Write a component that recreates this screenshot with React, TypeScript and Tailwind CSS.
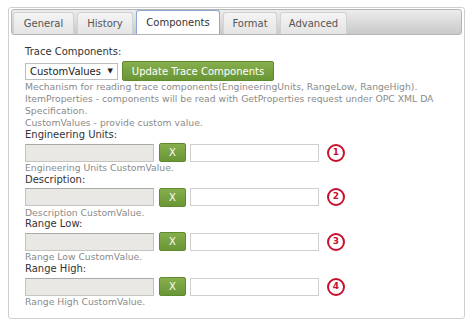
const tabs = [
    { name: 'General', w: 'w-[61px]' },
    { name: 'History', w: 'w-[56px]' },
    { name: 'Components', w: 'w-[84px]' },
    { name: 'Format', w: 'w-[54px]' },
    { name: 'Advanced', w: 'w-[67px]' },
];

const fields = [
    { label: 'Engineering Units:', note: 'Engineering Units CustomValue.', n: 1 },
    { label: 'Description:', note: 'Description CustomValue.', n: 2 },
    { label: 'Range Low:', note: 'Range Low CustomValue.', n: 3 },
    { label: 'Range High:', note: 'Range High CustomValue.', n: 4 },
];

const FieldRow = ({ label, note, n }: { label: string; note: string; n: number }) => (
    <div className="flex flex-col">
        <div className="text-[10px] leading-[12px] text-[#333]">{label}</div>
        <div className="mt-[2px] flex h-[19px] items-center">
            <div className="h-[18px] w-[129px] border border-[#c4c4c0] border-t-[#a8a8a4] bg-[#e9e8e4]" />
            <button className="ml-[5px] flex h-[19px] w-[27px] items-center justify-center rounded-[2px] border border-[#5f8a30] bg-gradient-to-b from-[#86ae4c] to-[#6a9636] text-[10px] text-white">
                X
            </button>
            <div className="ml-[4px] h-[18px] w-[129px] border border-[#cfcfcf] bg-white" />
            <div className="ml-[8px] flex h-[18px] w-[18px] items-center justify-center rounded-full border-2 border-[#c8102e] text-[9px] font-bold text-[#c8102e]">
                {n}
            </div>
        </div>
        <div className="text-[9.25px] leading-[11.7px] text-[#8a8a8a]">{note}</div>
    </div>
);

const App = () => {
    return (
        <div className="h-[327px] w-[474px] bg-white pl-[8px] pt-[7px] font-['DejaVu_Sans',Verdana,sans-serif]">
            <div className="w-[457px] rounded-[3px] border border-[#cfcfcf] bg-white p-[1px] pl-[2px] pr-[2px]">
                <div className="flex h-[26px] items-end gap-[3px] rounded-[3px] border border-[#b5b5b5] bg-gradient-to-b from-[#ececec] to-[#c9c9c9] pl-[1px]">
                    {tabs.map((t) =>
                        t.name === 'Components' ? (
                            <div
                                key={t.name}
                                className={`${t.w} flex h-[24px] items-center justify-center rounded-t-[3px] border border-b-0 border-[#8ea8d6] bg-white text-[10px] text-[#333]`}
                            >
                                {t.name}
                            </div>
                        ) : (
                            <div
                                key={t.name}
                                className={`${t.w} flex h-[22px] items-center justify-center rounded-t-[3px] border border-b-0 border-[#d2d2d2] bg-gradient-to-b from-[#f4f4f4] to-[#e4e4e4] text-[10px] text-[#555]`}
                            >
                                {t.name}
                            </div>
                        ),
                    )}
                </div>
                <div className="flex flex-col pb-[9px] pl-[14px] pt-[11px]">
                    <div className="text-[10px] leading-[12px] text-[#333]">Trace Components:</div>
                    <div className="mt-[3px] flex h-[20px] items-center">
                        <div className="flex h-[17px] w-[93px] items-center justify-between border border-[#bdbdbd] bg-white pl-[4px] pr-[4px] text-[10px] text-[#222]">
                            <span>CustomValues</span>
                            <span className="text-[7px]">▼</span>
                        </div>
                        <button className="ml-[4px] h-[20px] w-[152px] rounded-[2px] border border-[#5f8a30] bg-gradient-to-b from-[#86ae4c] to-[#6a9636] text-[10px] text-white">
                            Update Trace Components
                        </button>
                    </div>
                    <div className="text-[9.25px] leading-[12px] text-[#8a8a8a]">
                        <div>Mechanism for reading trace components(EngineeringUnits, RangeLow, RangeHigh).</div>
                        <div>ItemProperties - components will be read with GetProperties request under OPC XML DA</div>
                        <div>Specification.</div>
                        <div>CustomValues - provide custom value.</div>
                    </div>
                    {fields.map((f) => (
                        <FieldRow key={f.n} {...f} />
                    ))}
                </div>
            </div>
        </div>
    );
};

export default App;
